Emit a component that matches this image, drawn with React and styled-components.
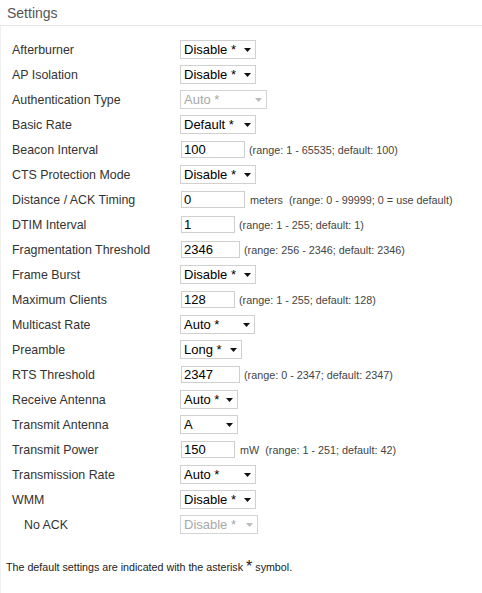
import React from "react";
import styled, { createGlobalStyle } from "styled-components";

const Global = createGlobalStyle`
  html, body { margin: 0; padding: 0; background: #fff; }
  body { font-family: "Liberation Sans", Arial, sans-serif; color: #333; }
`;

const Page = styled.div`
  width: 482px;
  height: 593px;
  box-sizing: border-box;
  display: flex;
  flex-direction: column;
`;

const Header = styled.div`
  height: 26px;
  box-sizing: border-box;
  border-bottom: 1px solid #e6e6e6;
  padding-left: 7px;
  display: flex;
  align-items: center;
  font-size: 14px;
  color: #555;
`;

const Body = styled.div`
  flex: 1;
  border-left: 1px solid #f0f0f0;
  padding-top: 11px;
  display: flex;
  flex-direction: column;
`;

const Row = styled.div`
  height: 25px;
  display: grid;
  grid-template-columns: 168px 1fr;
  align-items: center;
  padding-left: 11px;
`;

const Label = styled.div`
  font-size: 12.4px;
  color: #333;
  padding-left: ${(p) => (p.$indent ? 12 : 0)}px;
`;

const Controls = styled.div`
  display: flex;
  align-items: center;
`;

const SelectBox = styled.div`
  width: ${(p) => p.$w}px;
  height: 19px;
  box-sizing: border-box;
  border: 1px solid ${(p) => (p.$disabled ? "#d4d4d4" : "#d0d0d0")};
  background: #fff;
  display: flex;
  align-items: center;
  justify-content: space-between;
  padding: 0 4px 0 3px;
  font-size: 13px;
  color: ${(p) => (p.$disabled ? "#a8a8a8" : "#000")};
`;

const Arrow = styled.svg`
  width: 7px;
  height: 4px;
  flex: none;
`;

const Input = styled.div`
  width: ${(p) => p.$w}px;
  height: 17px;
  box-sizing: border-box;
  margin-left: 1px;
  border: 1px solid #cfcfcf;
  background: #fff;
  display: flex;
  align-items: center;
  padding-left: 2px;
  font-size: 13px;
  color: #000;
`;

const Note = styled.span`
  font-size: 10.8px;
  color: #444;
  margin-left: ${(p) => p.$gap || 4}px;
  white-space: nowrap;
`;

const Footer = styled.div`
  margin-top: 24px;
  padding-left: 5px;
  font-size: 10.7px;
  color: #222;
  display: flex;
  align-items: baseline;
`;

const Star = styled.span`
  font-size: 16px;
  position: relative;
  top: 1px;
  margin: 0 3px 0 3px;
  line-height: 10px;
`;

function Select({ value, w, disabled }) {
  return (
    <SelectBox $w={w} $disabled={disabled}>
      <span>{value}</span>
      <Arrow viewBox="0 0 7 4">
        <path d="M0 0 L7 0 L3.5 4 Z" fill={disabled ? "#bbb" : "#111"} />
      </Arrow>
    </SelectBox>
  );
}

const rows = [
  { label: "Afterburner", type: "select", value: "Disable *", w: 76 },
  { label: "AP Isolation", type: "select", value: "Disable *", w: 76 },
  { label: "Authentication Type", type: "select", value: "Auto *", w: 87, disabled: true },
  { label: "Basic Rate", type: "select", value: "Default *", w: 76 },
  { label: "Beacon Interval", type: "input", value: "100", w: 64, note: "(range: 1 - 65535; default: 100)" },
  { label: "CTS Protection Mode", type: "select", value: "Disable *", w: 76 },
  { label: "Distance / ACK Timing", type: "input", value: "0", w: 64, unit: "meters", note: "(range: 0 - 99999; 0 = use default)" },
  { label: "DTIM Interval", type: "input", value: "1", w: 54, note: "(range: 1 - 255; default: 1)" },
  { label: "Fragmentation Threshold", type: "input", value: "2346", w: 59, note: "(range: 256 - 2346; default: 2346)" },
  { label: "Frame Burst", type: "select", value: "Disable *", w: 76 },
  { label: "Maximum Clients", type: "input", value: "128", w: 54, note: "(range: 1 - 255; default: 128)" },
  { label: "Multicast Rate", type: "select", value: "Auto *", w: 75 },
  { label: "Preamble", type: "select", value: "Long *", w: 62 },
  { label: "RTS Threshold", type: "input", value: "2347", w: 59, note: "(range: 0 - 2347; default: 2347)" },
  { label: "Receive Antenna", type: "select", value: "Auto *", w: 58 },
  { label: "Transmit Antenna", type: "select", value: "A", w: 58 },
  { label: "Transmit Power", type: "input", value: "150", w: 54, unit: "mW", note: "(range: 1 - 251; default: 42)" },
  { label: "Transmission Rate", type: "select", value: "Auto *", w: 76 },
  { label: "WMM", type: "select", value: "Disable *", w: 76 },
  { label: "No ACK", type: "select", value: "Disable *", w: 78, disabled: true, indent: true },
];

export default function App() {
  return (
    <>
      <Global />
      <Page>
        <Header>Settings</Header>
        <Body>
          {rows.map((r) => (
            <Row key={r.label}>
              <Label $indent={r.indent}>{r.label}</Label>
              <Controls>
                {r.type === "select" ? (
                  <Select value={r.value} w={r.w} disabled={r.disabled} />
                ) : (
                  <>
                    <Input $w={r.w}>{r.value}</Input>
                    {r.unit && <Note $gap={5}>{r.unit}</Note>}
                    {r.note && <Note $gap={r.unit ? 6 : 4}>{r.note}</Note>}
                  </>
                )}
              </Controls>
            </Row>
          ))}
          <Footer>
            The default settings are indicated with the asterisk<Star>*</Star>symbol.
          </Footer>
        </Body>
      </Page>
    </>
  );
}
